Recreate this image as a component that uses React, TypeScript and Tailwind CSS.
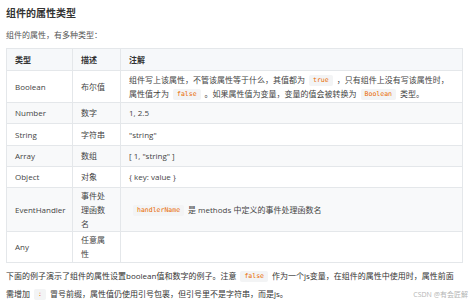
import React from 'react';

const Code: React.FC<{ children: React.ReactNode }> = ({ children }) => (
  <code className="mx-[4px] inline-block rounded-[2px] bg-[#f3f4f5] px-[4px] align-middle font-['DejaVu_Sans_Mono',monospace] text-[6.5px] leading-[11px] text-[#e96900]">
    {children}
  </code>
);

const rows: { type: string; desc: React.ReactNode; note: React.ReactNode; h: string }[] = [
  {
    type: 'Boolean',
    desc: '布尔值',
    note: (
      <>
        组件写上该属性，不管该属性等于什么，其值都为<Code>true</Code>，只有组件上没有写该属性时，属性值才为<Code>false</Code>。如果属性值为变量，变量的值会被转换为<Code>Boolean</Code>类型。
      </>
    ),
    h: 'h-[32px]',
  },
  { type: 'Number', desc: '数字', note: '1, 2.5', h: 'h-[21px]' },
  { type: 'String', desc: '字符串', note: '"string"', h: 'h-[22px]' },
  { type: 'Array', desc: '数组', note: '[ 1, "string" ]', h: 'h-[21px]' },
  { type: 'Object', desc: '对象', note: '{ key: value }', h: 'h-[21px]' },
  {
    type: 'EventHandler',
    desc: '事件处理函数名',
    note: (
      <>
        <Code>handlerName</Code>是 methods 中定义的事件处理函数名
      </>
    ),
    h: 'h-[44px]',
  },
  { type: 'Any', desc: '任意属性', note: '', h: 'h-[31px]' },
];

export default function App() {
  return (
    <div className="relative h-[305px] w-[474px] overflow-hidden bg-white px-[6px] pt-[6px] font-['Open_Sans','Noto_Sans_CJK_SC',sans-serif] text-[#444]">
      <h2 className="text-[10px] font-bold leading-[14px] text-[#333]">组件的属性类型</h2>
      <p className="mt-[9px] text-[8px] leading-[12px] text-[#555]">组件的属性，有多种类型：</p>

      <table className="mt-[7px] w-[457px] table-fixed border-collapse text-[8px] leading-[14px]">
        <colgroup>
          <col className="w-[66px]" />
          <col className="w-[48px]" />
          <col />
        </colgroup>
        <thead>
          <tr className="h-[22px] bg-[#f6f8fa]">
            <th className="border border-[#e4e7ea] px-[8px] text-left font-bold text-[#333]">类型</th>
            <th className="border border-[#e4e7ea] px-[8px] text-left font-bold text-[#333]">描述</th>
            <th className="border border-[#e4e7ea] px-[8px] text-left font-bold text-[#333]">注解</th>
          </tr>
        </thead>
        <tbody>
          {rows.map((r, i) => (
            <tr key={r.type} className={`${r.h} ${i % 2 === 1 ? 'bg-[#f8f9fa]' : 'bg-white'}`}>
              <td className="border border-[#e4e7ea] px-[8px] py-0 align-middle">{r.type}</td>
              <td className="border border-[#e4e7ea] px-[8px] py-0 align-middle">{r.desc}</td>
              <td className="border border-[#e4e7ea] px-[8px] py-0 align-middle">{r.note}</td>
            </tr>
          ))}
        </tbody>
      </table>

      <p className="mt-[4px] w-[452px] text-[8px] leading-[18px] text-[#333]">
        下面的例子演示了组件的属性设置boolean值和数字的例子。注意<Code>false</Code>作为一个js变量，在组件的属性中使用时，属性前面需增加<Code>:</Code>冒号前缀，属性值仍使用引号包裹，但引号里不是字符串，而是js。
      </p>
      <span className="absolute bottom-[5px] right-[6px] text-[7px] leading-[10px] text-[#b5b5b5]">CSDN @有会匠解</span>
    </div>
  );
}
